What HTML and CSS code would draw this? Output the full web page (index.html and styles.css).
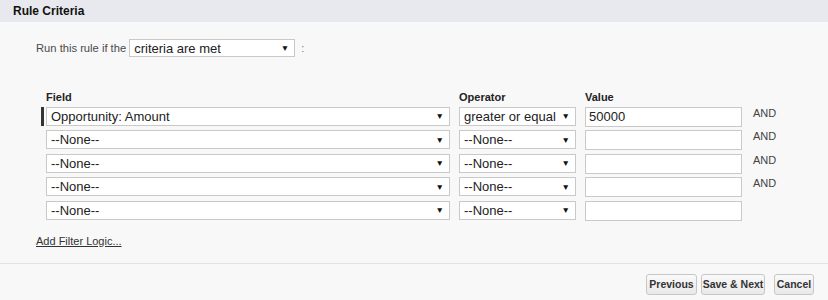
FILE: index.html
```html
<!DOCTYPE html>
<html lang="en">
<head>
  <meta charset="UTF-8" />
  <title>Rule Criteria</title>
  <link rel="stylesheet" href="styles.css">
</head>
<body>

  <!-- Section header -->
  <div class="header">Rule Criteria</div>

  <!-- Run condition -->
  <div class="run-line">
    <span class="run-label">Run this rule if the</span>
    <div class="select select-criteria"><span>criteria are met</span><span class="arrow">&#9660;</span></div>
    <span class="colon">:</span>
  </div>

  <!-- Filter rows -->
  <div class="filters">
    <div class="filter-head">
      <span class="col-field">Field</span>
      <span class="col-op">Operator</span>
      <span class="col-value">Value</span>
    </div>

    <div class="filter-row">
      <span class="required on"></span>
      <div class="select field"><span>Opportunity: Amount</span><span class="arrow">&#9660;</span></div>
      <div class="select op"><span>greater or equal</span><span class="arrow">&#9660;</span></div>
      <div class="value">50000</div>
      <span class="and">AND</span>
    </div>
    <div class="filter-row">
      <span class="required"></span>
      <div class="select field"><span>--None--</span><span class="arrow">&#9660;</span></div>
      <div class="select op"><span>--None--</span><span class="arrow">&#9660;</span></div>
      <div class="value"></div>
      <span class="and">AND</span>
    </div>
    <div class="filter-row">
      <span class="required"></span>
      <div class="select field"><span>--None--</span><span class="arrow">&#9660;</span></div>
      <div class="select op"><span>--None--</span><span class="arrow">&#9660;</span></div>
      <div class="value"></div>
      <span class="and">AND</span>
    </div>
    <div class="filter-row">
      <span class="required"></span>
      <div class="select field"><span>--None--</span><span class="arrow">&#9660;</span></div>
      <div class="select op"><span>--None--</span><span class="arrow">&#9660;</span></div>
      <div class="value"></div>
      <span class="and">AND</span>
    </div>
    <div class="filter-row">
      <span class="required"></span>
      <div class="select field"><span>--None--</span><span class="arrow">&#9660;</span></div>
      <div class="select op"><span>--None--</span><span class="arrow">&#9660;</span></div>
      <div class="value"></div>
    </div>
  </div>

  <a class="filter-logic" href="#">Add Filter Logic...</a>

  <!-- Footer buttons -->
  <div class="footer">
    <button class="btn btn-prev">Previous</button>
    <button class="btn btn-save">Save &amp; Next</button>
    <button class="btn btn-cancel">Cancel</button>
  </div>

</body>
</html>
```

FILE: styles.css
```css
* {
  margin: 0;
  padding: 0;
  box-sizing: border-box;
}

body {
  background: #f8f8f8;
  font-family: "Liberation Sans", Arial, sans-serif;
  color: #333;
  width: 828px;
  height: 300px;
  overflow: hidden;
}

.header {
  height: 22px;
  line-height: 22px;
  padding-left: 13px;
  background: #e8e9ee;
  font-size: 12px;
  font-weight: bold;
  color: #111;
}

.run-line {
  display: flex;
  align-items: center;
  margin-top: 17px;
  padding-left: 36px;
  height: 18px;
}

.run-label {
  font-size: 11.2px;
  color: #4a4a4a;
  margin-right: 3px;
}

.colon {
  font-size: 11px;
  color: #777;
  margin-left: 6px;
}

/* fake dropdowns */
.select {
  display: flex;
  align-items: center;
  justify-content: space-between;
  height: 19px;
  padding: 0 5px 0 4px;
  background: #fff;
  border: 1px solid #c9c9c9;
  font-size: 13px;
  color: #222;
  white-space: nowrap;
}

.select .arrow {
  font-size: 8.5px;
  color: #111;
}

.select-criteria {
  width: 166px;
  height: 18px;
}

.filters {
  margin-top: 34px;
  display: flex;
  flex-direction: column;
  gap: 4.5px;
}

.filter-head {
  display: flex;
  padding-left: 46px;
  font-size: 11px;
  font-weight: bold;
  color: #222;
  height: 12px;
  line-height: 12px;
  margin-bottom: -1px;
}

.col-field {
  width: 413px;
}

.col-op {
  width: 126px;
}

.filter-row {
  display: flex;
  padding-left: 41px;
  height: 19px;
}

.required {
  width: 3px;
  margin-right: 2px;
}

.required.on {
  background: #333;
}

.field {
  width: 404px;
  margin-right: 9px;
}

.op {
  width: 117px;
  margin-right: 9px;
}

.value {
  width: 157px;
  height: 20px;
  padding-left: 3px;
  background: #fff;
  border: 1px solid #c9c9c9;
  font-size: 13px;
  line-height: 18px;
  color: #222;
}

.and {
  margin-left: 11px;
  font-size: 11px;
  color: #444;
  line-height: 13px;
}

.filter-logic {
  display: block;
  margin: 15px 0 0 36px;
  width: fit-content;
  font-size: 11px;
  color: #333;
}

.footer {
  margin-top: 16px;
  border-top: 1px solid #e2e2e2;
  display: flex;
  justify-content: flex-end;
  padding: 10px 14px 0 0;
}

.btn {
  height: 21px;
  padding: 0;
  background: linear-gradient(#fafafa, #e8e8e8);
  border: 1px solid #c6c6c6;
  border-radius: 3px;
  font-family: "Liberation Sans", Arial, sans-serif;
  font-size: 10.5px;
  font-weight: bold;
  color: #333;
  cursor: pointer;
}

.btn-prev {
  width: 51px;
}

.btn-save {
  width: 64px;
  margin-left: 4px;
}

.btn-cancel {
  width: 40px;
  margin-left: 9px;
}
```
